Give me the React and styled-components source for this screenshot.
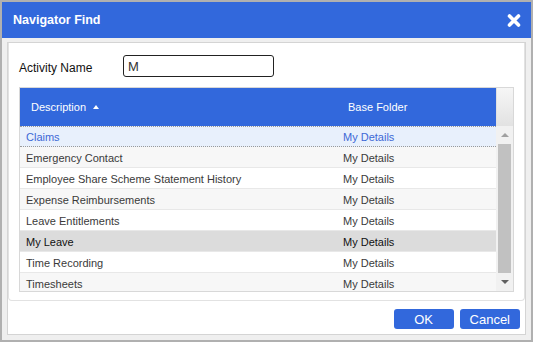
import React from 'react'
import styled, { createGlobalStyle } from 'styled-components'

const GlobalStyle = createGlobalStyle`
  html, body {
    margin: 0;
    padding: 0;
    background: #b0b0b0;
    font-family: "Liberation Sans", Arial, sans-serif;
  }
`

const blue = '#3268dc'

const Dialog = styled.div`
  margin: 2px 2px 0 2px;
  width: 529px;
  height: 338px;
  display: flex;
  flex-direction: column;
  background: #efefef;
  box-sizing: border-box;
`

const TitleBar = styled.div`
  height: 36px;
  flex: none;
  background: ${blue};
  display: flex;
  align-items: center;
  justify-content: space-between;
  padding: 0 10px 0 11px;
  color: #fff;
  font-weight: bold;
  font-size: 12.5px;
`

const CloseButton = styled.button`
  border: none;
  background: none;
  padding: 0;
  display: flex;
  cursor: pointer;
`

const Body = styled.div`
  flex: 1;
  padding: 4px 5px 5px 5px;
  display: flex;
  flex-direction: column;
`

const Sheet = styled.div`
  flex: 1;
  background: #fff;
  border: 1px solid #d4d4d4;
  display: flex;
  flex-direction: column;
`

const Panel = styled.div`
  border: 1px solid #e2e2e2;
  border-top: none;
  border-radius: 0 0 4px 4px;
  padding: 12px 10px 8px 10px;
  display: flex;
  flex-direction: column;
  gap: 10px;
`

const FieldRow = styled.div`
  display: flex;
  align-items: center;
`

const Label = styled.label`
  width: 104px;
  font-size: 12px;
  color: #111;
  padding-top: 4px;
`

const TextInput = styled.input`
  width: 151px;
  height: 22px;
  box-sizing: border-box;
  border: 1px solid #222;
  border-radius: 3px;
  padding: 0 4px;
  font-family: "Liberation Sans", Arial, sans-serif;
  font-size: 13px;
  color: #333;
  outline: none;
`

const Table = styled.div`
  border: 1px solid #d8d8d8;
  display: grid;
  grid-template-columns: 1fr 17px;
`

const HeaderRow = styled.div`
  height: 38px;
  background: ${blue};
  display: grid;
  grid-template-columns: 317px 1fr;
  align-items: center;
  color: #fff;
  font-size: 11px;
`

const HeaderCell = styled.div`
  padding-left: 11px;
  display: flex;
  align-items: center;
  gap: 7px;
`

const SortArrow = styled.span`
  width: 0;
  height: 0;
  border-left: 3.5px solid transparent;
  border-right: 3.5px solid transparent;
  border-bottom: 4px solid #fff;
`

const HeaderCorner = styled.div`
  background: linear-gradient(#f6f6f6, #e2e2e2);
  border-left: 1px solid #e0e0e0;
`

const Rows = styled.div`
  height: 165px;
  overflow: hidden;
`

const Row = styled.div`
  height: 21px;
  box-sizing: border-box;
  padding-top: 1px;
  display: grid;
  grid-template-columns: 317px 1fr;
  align-items: center;
  font-size: 11px;
  color: ${(p) => (p.$focus ? '#3d68d6' : p.$hover ? '#111' : '#3a3a3a')};
  background: ${(p) =>
    p.$focus ? '#e8f0fc' : p.$hover ? '#dcdcdc' : p.$alt ? '#f7f7f7' : '#fff'};
  border-top: ${(p) => (p.$focus ? '1px dotted #9a9a9a' : 'none')};
  border-bottom: ${(p) => (p.$focus ? '1px dotted #9a9a9a' : '1px solid #e8e8e8')};
`

const Cell = styled.div`
  padding-left: 6px;
  white-space: nowrap;
`

const ScrollBar = styled.div`
  background: #f1f1f1;
  display: flex;
  flex-direction: column;
  align-items: center;
`

const ScrollButton = styled.div`
  height: 18px;
  width: 100%;
  display: flex;
  align-items: center;
  justify-content: center;
  flex: none;
`

const Triangle = styled.span`
  width: 0;
  height: 0;
  border-left: 4px solid transparent;
  border-right: 4px solid transparent;
  ${(p) => (p.$down ? 'border-top: 4px solid #606060;' : 'border-bottom: 4px solid #a0a0a0;')}
`

const Thumb = styled.div`
  width: 13px;
  flex: 1;
  background: #c1c1c1;
  margin-right: 1px;
`

const Footer = styled.div`
  flex: 1;
  display: flex;
  justify-content: flex-end;
  align-items: flex-start;
  gap: 6px;
  padding: 8px 5px 0 0;
`

const Button = styled.button`
  height: 20px;
  min-width: ${(p) => p.$w}px;
  border: none;
  border-radius: 3px;
  background: ${blue};
  color: #fff;
  font-family: "Liberation Sans", Arial, sans-serif;
  font-size: 13px;
  padding: 0 10px;
  cursor: pointer;
`

const activities = [
  'Claims',
  'Emergency Contact',
  'Employee Share Scheme Statement History',
  'Expense Reimbursements',
  'Leave Entitlements',
  'My Leave',
  'Time Recording',
  'Timesheets',
]

const App = () => {
  return (
    <>
      <GlobalStyle />
      <Dialog>
        <TitleBar>
          <span>Navigator Find</span>
          <CloseButton aria-label="Close">
            <svg width="14" height="13" viewBox="0 0 14 13">
              <path d="M2.5 2 L11.5 11 M11.5 2 L2.5 11" stroke="#fff" strokeWidth="3.6" strokeLinecap="round" />
            </svg>
          </CloseButton>
        </TitleBar>
        <Body>
          <Sheet>
            <Panel>
              <FieldRow>
                <Label>Activity Name</Label>
                <TextInput defaultValue="M" />
              </FieldRow>
              <Table>
                <HeaderRow>
                  <HeaderCell>
                    Description <SortArrow />
                  </HeaderCell>
                  <HeaderCell>Base Folder</HeaderCell>
                </HeaderRow>
                <HeaderCorner />
                <Rows>
                  {activities.map((name, i) => (
                    <Row key={name} $focus={i === 0} $hover={name === 'My Leave'} $alt={i % 2 === 1}>
                      <Cell>{name}</Cell>
                      <Cell>My Details</Cell>
                    </Row>
                  ))}
                </Rows>
                <ScrollBar>
                  <ScrollButton>
                    <Triangle />
                  </ScrollButton>
                  <Thumb />
                  <ScrollButton>
                    <Triangle $down />
                  </ScrollButton>
                </ScrollBar>
              </Table>
            </Panel>
            <Footer>
              <Button $w={60}>OK</Button>
              <Button $w={60}>Cancel</Button>
            </Footer>
          </Sheet>
        </Body>
      </Dialog>
    </>
  )
}

export default App
